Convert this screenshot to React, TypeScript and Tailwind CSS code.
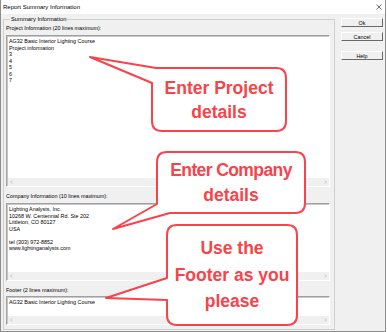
import React from "react";

const RED = "#f8434a";

function Chevron({ dir }: { dir: "l" | "r" }) {
  return (
    <svg width="3" height="4" viewBox="0 0 3 4" className="shrink-0">
      <path
        d={dir === "l" ? "M2.2 0.4 L0.6 2 L2.2 3.6" : "M0.8 0.4 L2.4 2 L0.8 3.6"}
        fill="none"
        stroke="#b0b0b0"
        strokeWidth="0.7"
      />
    </svg>
  );
}

function TextBox({ lines, height }: { lines: string[]; height: string }) {
  return (
    <div className={`w-[324px] ${height} flex flex-col border-t border-l border-[#a0a0a0] border-r-white border-b-white border-r border-b`}>
      <div className="flex-1 flex flex-col border-t border-l border-[#c8c8c8] bg-white min-h-0">
        <div className="flex-1 pl-[1px] pt-[1px] text-[5.4px] leading-[6.5px] text-black overflow-hidden">
          {lines.map((l, i) => (
            <div key={i} className="h-[6.5px] whitespace-pre">
              {l}
            </div>
          ))}
        </div>
        <div className="h-[8px] bg-[#f0f0f0] flex items-center justify-between px-[2px]">
          <Chevron dir="l" />
          <Chevron dir="r" />
        </div>
      </div>
    </div>
  );
}

function Btn({ label, className = "" }: { label: string; className?: string }) {
  return (
    <div
      className={`w-[42px] h-[9px] bg-[#f0f0f0] border-t border-l border-white border-r border-b border-r-[#696969] border-b-[#696969] flex items-center justify-center text-[5.4px] leading-[6px] text-black ${className}`}
    >
      {label}
    </div>
  );
}

export default function App() {
  return (
    <div className="relative w-[387px] h-[332px] bg-white overflow-hidden font-['Liberation_Sans',Arial,sans-serif]">
      <div className="w-[386px] h-[332px] flex flex-col border-l border-r border-b border-[#8c8c8c]">
        <div className="h-[14px] shrink-0 bg-white flex items-center justify-between pl-[2px] pr-[3px]">
          <span className="text-[6px] leading-[7px] text-black">Report Summary Information</span>
          <svg width="6" height="6" viewBox="0 0 6 6">
            <path d="M0.5 0.5 L5.5 5.5 M5.5 0.5 L0.5 5.5" stroke="#333" strokeWidth="0.7" />
          </svg>
        </div>
        <div className="flex-1 bg-[#f0f0f0] flex pl-[2px]">
          <fieldset className="mt-[1.5px] w-[332px] h-[314px] border border-[#cfcfcf] pl-[2px] flex flex-col">
            <legend className="ml-[4px] px-[1px] text-[5.8px] leading-[7px] text-black">Summary Information</legend>
            <div className="mt-[2px] text-[5.4px] leading-[7px] text-black">Project Information (20 lines maximum):</div>
            <div className="mt-[3.5px]">
              <TextBox
                height="h-[152px]"
                lines={["AG32 Basic Interior Lighting Course", "Project information", "3", "4", "5", "6", "7"]}
              />
            </div>
            <div className="mt-[5.5px] text-[5.4px] leading-[7px] text-black">Company Information (10 lines maximum):</div>
            <div className="mt-[3.5px]">
              <TextBox
                height="h-[78px]"
                lines={[
                  "Lighting Analysts, Inc.",
                  "10268 W. Centennial Rd. Ste 202",
                  "Littleton, CO 80127",
                  "USA",
                  "",
                  "tel (303) 972-8852",
                  "www.lightinganalysts.com",
                ]}
              />
            </div>
            <div className="mt-[5.5px] text-[5.4px] leading-[7px] text-black">Footer (2 lines maximum):</div>
            <div className="mt-[2.5px]">
              <TextBox height="h-[29px]" lines={["AG32 Basic Interior Lighting Course"]} />
            </div>
          </fieldset>
          <div className="ml-[6px] mt-[4px] flex flex-col">
            <Btn label="Ok" />
            <Btn label="Cancel" className="mt-[5px]" />
            <Btn label="Help" className="mt-[10px]" />
          </div>
        </div>
      </div>

      {/* Callouts overlay */}
      <svg className="absolute left-0 top-0 pointer-events-none" width="387" height="332" viewBox="0 0 387 332">
        <path
          d="M156 68 L276 68 Q286 68 286 78 L286 121 Q286 131 276 131 L162 131 Q152 131 152 121 L152 83 L90 57 Z"
          fill="white"
          stroke={RED}
          strokeWidth="2"
          strokeLinejoin="round"
        />
        <path
          d="M167 152 L295 152 Q305 152 305 162 L305 203 Q305 213 295 213 L170 213 L113 229 L157 204 L157 162 Q157 152 167 152 Z"
          fill="white"
          stroke={RED}
          strokeWidth="2"
          strokeLinejoin="round"
        />
        <path
          d="M177 225 L287 225 Q297 225 297 235 L297 315 Q297 325 287 325 L177 325 Q167 325 167 315 L167 300 L106 298 L167 278 L167 235 Q167 225 177 225 Z"
          fill="white"
          stroke={RED}
          strokeWidth="2"
          strokeLinejoin="round"
        />
      </svg>
      <div className="absolute left-[152px] top-[68px] w-[134px] h-[63px] flex items-center justify-center text-center text-[17.5px] leading-[24px] font-bold text-[#f8434a]">
        <div>
          Enter Project
          <br />
          details
        </div>
      </div>
      <div className="absolute left-[157px] top-[152px] w-[148px] h-[61px] flex items-center justify-center text-center text-[17.5px] leading-[25px] font-bold text-[#f8434a]">
        <div>
          <span className="tracking-[-0.6px]">Enter Company</span>
          <br />
          details
        </div>
      </div>
      <div className="absolute left-[167px] top-[225px] w-[130px] h-[100px] flex items-center justify-center text-center text-[17.5px] leading-[26.5px] font-bold text-[#f8434a]">
        <div>
          Use the
          <br />
          Footer as you
          <br />
          please
        </div>
      </div>
    </div>
  );
}
